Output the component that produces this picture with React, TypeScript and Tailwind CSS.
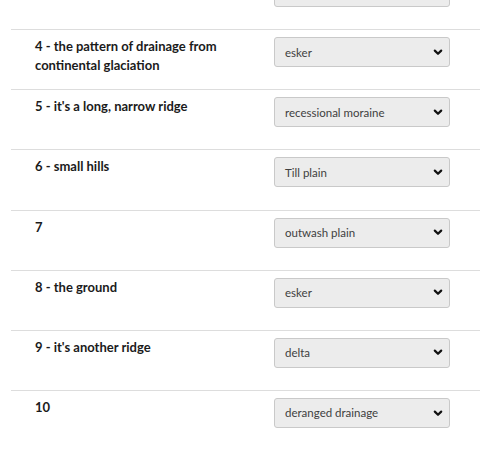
const rows = [
  { label: "", value: "" },
  { label: "4 - the pattern of drainage from continental glaciation", value: "esker" },
  { label: "5 - it's a long, narrow ridge", value: "recessional moraine" },
  { label: "6 - small hills", value: "Till plain" },
  { label: "7", value: "outwash plain" },
  { label: "8 - the ground", value: "esker" },
  { label: "9 - it's another ridge", value: "delta" },
  { label: "10", value: "deranged drainage" },
];

function Chevron() {
  return (
    <svg width="10" height="7" viewBox="0 0 10 7" className="shrink-0">
      <path
        d="M1.8 1.6 L5 4.8 L8.2 1.6"
        fill="none"
        stroke="#111"
        strokeWidth="2.2"
        strokeLinecap="round"
        strokeLinejoin="round"
      />
    </svg>
  );
}

function FakeSelect({ value }: { value: string }) {
  return (
    <div className="flex h-[30px] w-[176px] items-center justify-between rounded-[3px] border border-[#c9c9c9] bg-[#ececec] pl-[10px] pr-[6px]">
      <span className="text-[11.5px] text-[#404040]">{value}</span>
      <Chevron />
    </div>
  );
}

export default function App() {
  return (
    <div
      className="h-[465px] w-[480px] overflow-hidden bg-white"
      style={{ fontFamily: "Lato, 'Open Sans', sans-serif" }}
    >
      <div className="-mt-[31px] pl-[11px]">
        {rows.map((row, i) => (
          <div
            key={i}
            className="grid h-[60.17px] grid-cols-[263px_176px] border-t border-[#dddddd] pt-[7px]"
          >
            <div className="pl-[24px] pr-[40px] text-[13px] font-bold leading-[19px] text-[#1b1b1b]">
              {row.label}
            </div>
            <FakeSelect value={row.value} />
          </div>
        ))}
      </div>
    </div>
  );
}
